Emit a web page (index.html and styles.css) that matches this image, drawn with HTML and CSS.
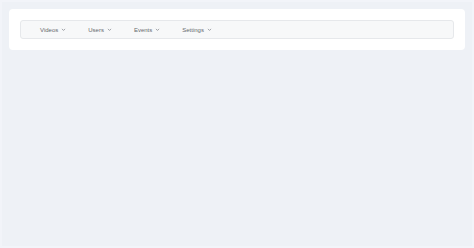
FILE: index.html
```html
<!DOCTYPE html>
<html>
<head>
<meta charset="utf-8">
<link rel="stylesheet" href="styles.css">
</head>
<body>
<div class="frame">
  <div class="card">
    <nav class="nav">
      <div class="item"><span>Videos</span><svg class="chev" viewBox="0 0 8 8"><path d="M1.5 3 L4 5.5 L6.5 3" /></svg></div>
      <div class="item"><span>Users</span><svg class="chev" viewBox="0 0 8 8"><path d="M1.5 3 L4 5.5 L6.5 3" /></svg></div>
      <div class="item"><span>Events</span><svg class="chev" viewBox="0 0 8 8"><path d="M1.5 3 L4 5.5 L6.5 3" /></svg></div>
      <div class="item"><span>Settings</span><svg class="chev" viewBox="0 0 8 8"><path d="M1.5 3 L4 5.5 L6.5 3" /></svg></div>
    </nav>
  </div>
</div>
</body>
</html>
```
FILE: styles.css
```css
html, body {
  margin: 0;
  padding: 0;
  height: 100%;
}
body {
  background: #f2f4f9;
  font-family: "Liberation Sans", Arial, sans-serif;
}
.frame {
  box-sizing: border-box;
  margin: 2px;
  height: calc(100% - 4px);
  background: #eef1f6;
  padding: 7px;
}
.card {
  background: #ffffff;
  border-radius: 4px;
  padding: 11px;
}
.nav {
  display: flex;
  align-items: center;
  height: 19px;
  box-sizing: border-box;
  border: 1px solid #e6e8eb;
  border-radius: 3px;
  background: #f7f8f9;
  padding: 0 8px;
}
.item {
  display: flex;
  align-items: center;
  padding: 0 11px;
  font-size: 6px;
  color: #66696e;
}
.chev {
  width: 5px;
  height: 5px;
  margin-left: 3px;
  fill: none;
  stroke: #7a7e84;
  stroke-width: 1.1;
}
```
